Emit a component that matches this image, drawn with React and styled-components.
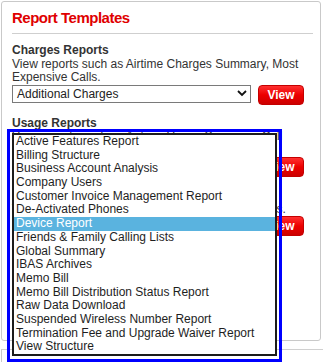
import React from "react";
import styled, { createGlobalStyle } from "styled-components";

const GlobalStyle = createGlobalStyle`
  body {
    margin: 0;
    background: #fff;
    font-family: "Liberation Sans", Arial, sans-serif;
  }
`;

const sections = [
  {
    title: "Charges Reports",
    desc: "View reports such as Airtime Charges Summary, Most Expensive Calls.",
    value: "Additional Charges",
  },
  {
    title: "Usage Reports",
    desc: "View reports such as Airtime Usage Summary, Call Detail by Wireless Number.",
    value: "Device Report",
  },
  {
    title: "Equipment Reports",
    desc: "View reports such as Equipment Details, Upgrades.",
    value: "Equipment Summary",
  },
];

const reports = [
  "Active Features Report",
  "Billing Structure",
  "Business Account Analysis",
  "Company Users",
  "Customer Invoice Management Report",
  "De-Activated Phones",
  "Device Report",
  "Friends & Family Calling Lists",
  "Global Summary",
  "IBAS Archives",
  "Memo Bill",
  "Memo Bill Distribution Status Report",
  "Raw Data Download",
  "Suspended Wireless Number Report",
  "Termination Fee and Upgrade Waiver Report",
  "View Structure",
];

const Chevron = () => (
  <svg width="10" height="7" viewBox="0 0 10 7">
    <polyline
      points="1,1 5,5 9,1"
      fill="none"
      stroke="#111"
      strokeWidth="1.8"
    />
  </svg>
);

const App = () => {
  return (
    <Page>
      <GlobalStyle />
      <Panel>
        <Title>Report Templates</Title>
        {sections.map((s) => (
          <Section key={s.title}>
            <Heading>{s.title}</Heading>
            <Desc>{s.desc}</Desc>
            <Row>
              <SelectBox>
                <span>{s.value}</span>
                <Chevron />
              </SelectBox>
              <ViewButton>View</ViewButton>
            </Row>
          </Section>
        ))}
      </Panel>
      <NextPanel />

      {/* open dropdown of the Usage Reports select, outlined in blue */}
      <Outline>
        <List>
          {reports.map((r) => (
            <ListItem key={r} $active={r === "Device Report"}>
              {r}
            </ListItem>
          ))}
        </List>
      </Outline>
    </Page>
  );
};

const Page = styled.div`
  position: relative;
  width: 323px;
  height: 362px;
  overflow: hidden;
`;

const Panel = styled.div`
  box-sizing: border-box;
  margin: 1px 0 0 1px;
  width: 320px;
  height: 340px;
  padding: 8px 7px 0 10px;
  border: 1px solid #c9c9c9;
  border-radius: 3px;
  background: #fff;
`;

const NextPanel = styled.div`
  margin: 8px 0 0 1px;
  height: 20px;
  border-top: 1px solid #d0d0d0;
  border-left: 1px solid #c9c9c9;
`;

const Title = styled.h1`
  margin: 0 0 10px;
  padding-bottom: 7px;
  border-bottom: 1px solid #cfcfcf;
  color: #e00000;
  font-size: 15px;
  letter-spacing: -0.5px;
  font-weight: bold;
  line-height: 16px;
`;

const Section = styled.div`
  margin-bottom: 12px;
  color: #333;
  font-size: 12px;
  line-height: 13.5px;
`;

const Heading = styled.h2`
  margin: 0;
  font-size: 12px;
  font-weight: bold;
  line-height: 13.5px;
`;

const Desc = styled.p`
  margin: 0;
`;

const Row = styled.div`
  display: flex;
  align-items: flex-start;
  gap: 7px;
`;

const SelectBox = styled.div`
  box-sizing: border-box;
  width: 239px;
  height: 18px;
  padding: 0 3px 0 4px;
  display: flex;
  align-items: center;
  justify-content: space-between;
  border: 1px solid #7a7a7a;
  background: #fff;
  color: #222;
  line-height: 14px;
`;

const ViewButton = styled.button`
  box-sizing: border-box;
  width: 46px;
  height: 20px;
  padding: 0;
  border: 1px solid #c40000;
  border-radius: 4px;
  background: linear-gradient(#ff3030 0%, #ec0000 50%, #cc0000 100%);
  color: #fff;
  font-family: "Liberation Sans", Arial, sans-serif;
  font-size: 12px;
  font-weight: bold;
  cursor: pointer;
`;

const Outline = styled.div`
  position: absolute;
  left: 7px;
  top: 129px;
  box-sizing: border-box;
  width: 275px;
  padding: 1px 2px 3px;
  border: 3px solid #0000ff;
`;

const List = styled.ul`
  margin: 0;
  padding: 0;
  list-style: none;
  border: 2px solid #1c1c1c;
  background: #fff;
`;

const ListItem = styled.li`
  padding-left: 2px;
  height: 13.7px;
  font-size: 12px;
  line-height: 13.7px;
  white-space: nowrap;
  color: ${(p) => (p.$active ? "#fff" : "#1e1e1e")};
  background: ${(p) => (p.$active ? "#5ab3df" : "transparent")};
`;

export default App;
